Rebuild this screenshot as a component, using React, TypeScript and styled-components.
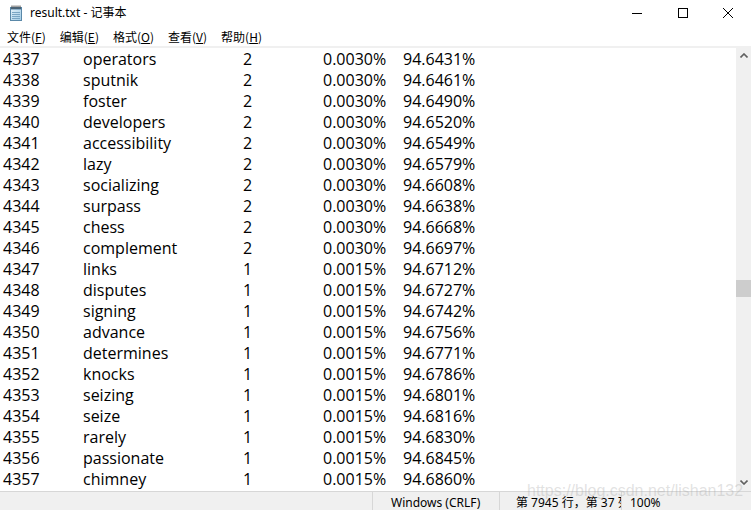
import React from "react";
import styled, { createGlobalStyle } from "styled-components";

const GlobalStyle = createGlobalStyle`
  html, body { margin: 0; padding: 0; background: #ffffff; }
  body { font-family: "Noto Sans CJK SC", "Noto Sans", sans-serif; }
  * { box-sizing: border-box; }
`;

const Window = styled.div`
  position: relative;
  width: 751px;
  height: 510px;
  overflow: hidden;
  display: flex;
  flex-direction: column;
  background: #ffffff;
`;

const TitleBar = styled.div`
  height: 25px;
  display: flex;
  align-items: center;
  flex-shrink: 0;
`;

const AppIcon = styled.div`
  width: 16px;
  height: 16px;
  margin-left: 8px;
  margin-right: 6px;
  display: flex;
`;

const TitleText = styled.div`
  font-family: "Noto Sans", "Noto Sans CJK SC", sans-serif;
  font-size: 12px;
  color: #000;
  flex: 1;
  line-height: 16px;
`;

const Controls = styled.div`
  display: flex;
  height: 100%;
`;

const CtrlButton = styled.div<{ $w: number }>`
  width: ${(p) => p.$w}px;
  height: 100%;
  display: flex;
  align-items: center;
  justify-content: ${(p) => (p.$w < 46 ? "flex-start" : "center")};
  padding-left: ${(p) => (p.$w < 46 ? 17 : 0)}px;
`;

const MenuBar = styled.div`
  height: 21px;
  display: flex;
  gap: 14px;
  padding: 3px 0 0 7px;
  flex-shrink: 0;
`;

const MenuItem = styled.span`
  font-size: 12px;
  line-height: 18px;
  color: #000;
  white-space: nowrap;
`;

const Divider = styled.div`
  height: 2px;
  background: #f0f0f0;
  flex-shrink: 0;
`;

const Body = styled.div`
  flex: 1;
  display: flex;
  min-height: 0;
`;

const TextArea = styled.div`
  flex: 1;
  padding: 1px 0 0 3px;
  overflow: hidden;
  font-family: "Open Sans", "Noto Sans", sans-serif;
  font-size: 16px;
  color: #000;
`;

const Row = styled.div`
  display: grid;
  grid-template-columns: 80px 160px 80px 80px 1fr;
  height: 21px;
  line-height: 21px;
  white-space: nowrap;
`;

const Cell = styled.span``;

const ScrollBar = styled.div`
  width: 15px;
  background: #f0f0f0;
  display: flex;
  flex-direction: column;
  margin-top: -1px;
`;

const ArrowBtn = styled.div`
  height: 17px;
  display: flex;
  align-items: center;
  justify-content: center;
  flex-shrink: 0;
`;

const Track = styled.div`
  flex: 1;
  display: flex;
  flex-direction: column;
`;

const Thumb = styled.div`
  height: 17px;
  background: #cdcdcd;
`;

const StatusBar = styled.div`
  height: 19px;
  border-top: 1px solid #d7d7d7;
  background: #f0f0f0;
  display: flex;
  flex-shrink: 0;
  font-family: "Noto Sans", "Noto Sans CJK SC", sans-serif;
  font-size: 12px;
  color: #000;
  line-height: 18px;
`;

const StatusCell = styled.div<{ $w?: number; $pl: number; $border?: boolean }>`
  width: ${(p) => (p.$w ? `${p.$w}px` : "auto")};
  flex: ${(p) => (p.$w ? "0 0 auto" : "1")};
  padding-left: ${(p) => p.$pl}px;
  padding-top: 2px;
  border-right: ${(p) => (p.$border ? "1px solid #d7d7d7" : "none")};
  white-space: nowrap;
  overflow: hidden;
`;

const Grip = styled.div`
  position: absolute;
  right: 1px;
  bottom: 1px;
  width: 7px;
  height: 7px;
`;

const Watermark = styled.div`
  position: absolute;
  left: 527px;
  top: 482px;
  font-family: "Liberation Sans", Arial, sans-serif;
  font-size: 16px;
  color: rgba(170, 170, 170, 0.35);
  white-space: nowrap;
  pointer-events: none;
`;

const rows: [string, string, string, string, string][] = [
  ["4337", "operators", "2", "0.0030%", "94.6431%"],
  ["4338", "sputnik", "2", "0.0030%", "94.6461%"],
  ["4339", "foster", "2", "0.0030%", "94.6490%"],
  ["4340", "developers", "2", "0.0030%", "94.6520%"],
  ["4341", "accessibility", "2", "0.0030%", "94.6549%"],
  ["4342", "lazy", "2", "0.0030%", "94.6579%"],
  ["4343", "socializing", "2", "0.0030%", "94.6608%"],
  ["4344", "surpass", "2", "0.0030%", "94.6638%"],
  ["4345", "chess", "2", "0.0030%", "94.6668%"],
  ["4346", "complement", "2", "0.0030%", "94.6697%"],
  ["4347", "links", "1", "0.0015%", "94.6712%"],
  ["4348", "disputes", "1", "0.0015%", "94.6727%"],
  ["4349", "signing", "1", "0.0015%", "94.6742%"],
  ["4350", "advance", "1", "0.0015%", "94.6756%"],
  ["4351", "determines", "1", "0.0015%", "94.6771%"],
  ["4352", "knocks", "1", "0.0015%", "94.6786%"],
  ["4353", "seizing", "1", "0.0015%", "94.6801%"],
  ["4354", "seize", "1", "0.0015%", "94.6816%"],
  ["4355", "rarely", "1", "0.0015%", "94.6830%"],
  ["4356", "passionate", "1", "0.0015%", "94.6845%"],
  ["4357", "chimney", "1", "0.0015%", "94.6860%"],
];

const menus: [string, string][] = [
  ["文件", "F"],
  ["编辑", "E"],
  ["格式", "O"],
  ["查看", "V"],
  ["帮助", "H"],
];

const NotepadIcon = () => (
  <svg width="16" height="16" viewBox="0 0 16 16">
    <defs>
      <linearGradient id="pg" x1="0" y1="0" x2="1" y2="1">
        <stop offset="0" stopColor="#e8f4fb" />
        <stop offset="1" stopColor="#9fcbe6" />
      </linearGradient>
    </defs>
    <rect x="2.5" y="2.5" width="11" height="13" fill="url(#pg)" stroke="#5a88a8" />
    <rect x="2.5" y="2.5" width="11" height="2" fill="#4f7fa3" />
    {[4, 6, 8, 10, 12].map((x) => (
      <line key={x} x1={x} y1="0.5" x2={x} y2="4" stroke="#444" strokeWidth="1" />
    ))}
    {[7, 9, 11, 13].map((y) => (
      <line key={y} x1="4" y1={y + 0.5} x2="12" y2={y + 0.5} stroke="#7aa6c4" strokeWidth="1" />
    ))}
  </svg>
);

export default function App() {
  return (
    <>
      <GlobalStyle />
      <Window>
        <TitleBar>
          <AppIcon>
            <NotepadIcon />
          </AppIcon>
          <TitleText>result.txt - 记事本</TitleText>
          <Controls>
            <CtrlButton $w={46}>
              <svg width="10" height="10" viewBox="0 0 10 10">
                <line x1="0" y1="5.5" x2="10" y2="5.5" stroke="#000" strokeWidth="1" />
              </svg>
            </CtrlButton>
            <CtrlButton $w={46}>
              <svg width="10" height="10" viewBox="0 0 10 10">
                <rect x="0.5" y="0.5" width="9" height="9" fill="none" stroke="#000" strokeWidth="1" />
              </svg>
            </CtrlButton>
            <CtrlButton $w={45}>
              <svg width="10" height="10" viewBox="0 0 10 10">
                <path d="M0 0 L10 10 M10 0 L0 10" stroke="#000" strokeWidth="1" />
              </svg>
            </CtrlButton>
          </Controls>
        </TitleBar>
        <MenuBar>
          {menus.map(([label, key]) => (
            <MenuItem key={key}>
              {label}(<u>{key}</u>)
            </MenuItem>
          ))}
        </MenuBar>
        <Divider />
        <Body>
          <TextArea>
            {rows.map((r) => (
              <Row key={r[0]}>
                <Cell>{r[0]}</Cell>
                <Cell>{r[1]}</Cell>
                <Cell>{r[2]}</Cell>
                <Cell>{r[3]}</Cell>
                <Cell>{r[4]}</Cell>
              </Row>
            ))}
          </TextArea>
          <ScrollBar>
            <ArrowBtn>
              <svg width="8" height="5" viewBox="0 0 8 5">
                <path d="M0.5 4.5 L4 1 L7.5 4.5" fill="none" stroke="#606060" strokeWidth="1.6" />
              </svg>
            </ArrowBtn>
            <Track>
              <div style={{ height: 216 }} />
              <Thumb />
            </Track>
            <ArrowBtn>
              <svg width="8" height="5" viewBox="0 0 8 5">
                <path d="M0.5 0.5 L4 4 L7.5 0.5" fill="none" stroke="#606060" strokeWidth="1.6" />
              </svg>
            </ArrowBtn>
          </ScrollBar>
        </Body>
        <StatusBar>
          <StatusCell $w={373} $pl={0} $border />
          <StatusCell $w={127} $pl={18} $border>
            Windows (CRLF)
          </StatusCell>
          <StatusCell $w={122} $pl={16} $border>
            第 7945 行，第 37 列
          </StatusCell>
          <StatusCell $pl={8}>100%</StatusCell>
        </StatusBar>
        <Watermark>https://blog.csdn.net/lishan132</Watermark>
        <Grip>
          <svg width="7" height="7" viewBox="0 0 7 7">
            {[
              [5, 1],
              [3, 3],
              [5, 3],
              [1, 5],
              [3, 5],
              [5, 5],
            ].map(([x, y]) => (
              <rect key={`${x}-${y}`} x={x} y={y} width="1.5" height="1.5" fill="#b0b0b0" />
            ))}
          </svg>
        </Grip>
      </Window>
    </>
  );
}
